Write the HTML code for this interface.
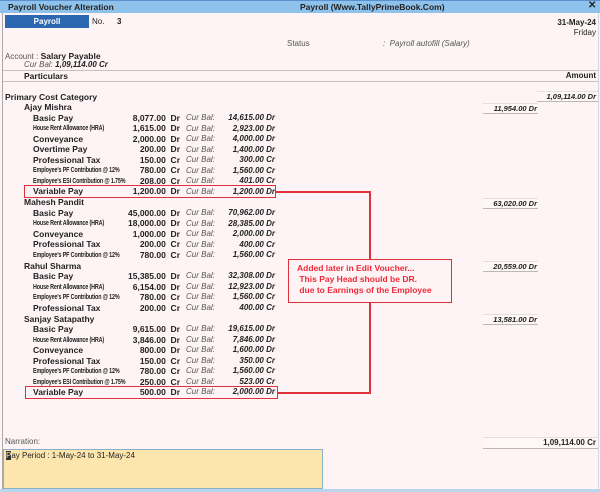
<!DOCTYPE html>
<html><head><meta charset="utf-8"><style>
*{margin:0;padding:0;box-sizing:border-box}
body{width:600px;height:492px;background:#fff4f5;font-family:"Liberation Sans",Arial,sans-serif;font-size:8px;color:#222;position:relative;overflow:hidden}
.a{position:absolute;white-space:nowrap;line-height:10px}
.b{font-weight:bold}
.i{font-style:italic}
.g{color:#555}
.r{text-align:right}
.c{display:inline-block;transform:scaleX(.72);transform-origin:left center;font-weight:bold;font-size:7.5px;letter-spacing:-0.2px}
.box{position:absolute;border-top:1px solid #e4e0e0;border-bottom:1px solid #bdb8b8;background:#fff6f6}
.n{font-size:8.5px}
.m{left:80px;width:100px}
</style></head><body>
<div class="a" style="left:0;top:0;width:600px;height:13px;background:#8fc2ea;border-top:1px solid #5a8fd0"></div>
<div class="a b" style="left:8px;top:2px;font-size:8.5px">Payroll Voucher Alteration</div>
<div class="a b" style="left:300px;top:2px;font-size:8.5px">Payroll (Www.TallyPrimeBook.Com)</div>
<div class="a b" style="left:588px;top:1px;font-size:10px">✕</div>
<div class="a" style="left:2px;top:13px;width:1px;height:476px;background:#aaa"></div>
<div class="a" style="left:598px;top:13px;width:1px;height:476px;background:#cfd8e8"></div>
<div class="a b" style="left:5px;top:15px;width:84px;height:13px;background:#2c67b2;color:#fff;text-align:center;line-height:13px">Payroll</div>
<div class="a" style="left:92px;top:17px">No.</div>
<div class="a b" style="left:117px;top:17px">3</div>
<div class="a b r" style="right:4px;top:18px">31-May-24</div>
<div class="a r" style="right:4px;top:28px">Friday</div>
<div class="a g" style="left:287px;top:39px">Status</div>
<div class="a g i" style="left:383px;top:39px">: &nbsp;Payroll autofill (Salary)</div>
<div class="a" style="left:5px;top:51px"><span class="g">Account : </span> <b class="n">Salary Payable</b></div>
<div class="a" style="left:24px;top:60px"><span class="i g">Cur Bal:</span> <b class="i">1,09,114.00 Cr</b></div>
<div class="a" style="left:3px;top:70px;width:595px;height:1px;background:#c8c0c0"></div>
<div class="a b n" style="left:24px;top:71px">Particulars</div>
<div class="a b r" style="right:4px;top:71px">Amount</div>
<div class="a" style="left:3px;top:81px;width:595px;height:1px;background:#c8c0c0"></div>
<div class="a b n" style="left:5px;top:92px">Primary Cost Category</div>
<div class="box" style="left:537px;top:91px;width:61px;height:11px"></div>
<div class="a b i r" style="right:4px;top:92px;font-size:7.5px">1,09,114.00 Dr</div>

<div class="box" style="left:483px;top:103px;width:55px;height:11px"></div>
<div class="a b i r" style="right:63px;top:104px;font-size:7.5px">11,954.00 Dr</div>
<div class="box" style="left:483px;top:198px;width:55px;height:11px"></div>
<div class="a b i r" style="right:63px;top:199px;font-size:7.5px">63,020.00 Dr</div>
<div class="box" style="left:483px;top:261px;width:55px;height:11px"></div>
<div class="a b i r" style="right:63px;top:262px;font-size:7.5px">20,559.00 Dr</div>
<div class="box" style="left:483px;top:314px;width:55px;height:11px"></div>
<div class="a b i r" style="right:63px;top:315px;font-size:7.5px">13,581.00 Dr</div>

<div class="a b n" style="left:24px;top:102px">Ajay Mishra</div>
<div class="a b n" style="left:24px;top:197px">Mahesh Pandit</div>
<div class="a b n" style="left:24px;top:261px">Rahul Sharma</div>
<div class="a b n" style="left:24px;top:314px">Sanjay Satapathy</div>

<div style="position:absolute;left:0;top:0">
<div class="a b n" style="left:33px;top:113px">Basic Pay</div><div class="a b r n m" style="top:113px">8,077.00 &nbsp;Dr</div>
<div class="a" style="left:33px;top:123px"><span class="c">House Rent Allowance (HRA)</span></div><div class="a b r n m" style="top:123px">1,615.00 &nbsp;Dr</div>
<div class="a b n" style="left:33px;top:134px">Conveyance</div><div class="a b r n m" style="top:134px">2,000.00 &nbsp;Dr</div>
<div class="a b n" style="left:33px;top:144px">Overtime Pay</div><div class="a b r n m" style="top:144px">200.00 &nbsp;Dr</div>
<div class="a b n" style="left:33px;top:155px">Professional Tax</div><div class="a b r n m" style="top:155px">150.00 &nbsp;Cr</div>
<div class="a" style="left:33px;top:165px"><span class="c">Employee's PF Contribution @ 12%</span></div><div class="a b r n m" style="top:165px">780.00 &nbsp;Cr</div>
<div class="a" style="left:33px;top:176px"><span class="c">Employee's ESI Contribution @ 1.75%</span></div><div class="a b r n m" style="top:176px">208.00 &nbsp;Cr</div>
<div class="a b n" style="left:33px;top:186px">Variable Pay</div><div class="a b r n m" style="top:186px">1,200.00 &nbsp;Dr</div>
<div class="a b n" style="left:33px;top:208px">Basic Pay</div><div class="a b r n m" style="top:208px">45,000.00 &nbsp;Dr</div>
<div class="a" style="left:33px;top:218px"><span class="c">House Rent Allowance (HRA)</span></div><div class="a b r n m" style="top:218px">18,000.00 &nbsp;Dr</div>
<div class="a b n" style="left:33px;top:229px">Conveyance</div><div class="a b r n m" style="top:229px">1,000.00 &nbsp;Dr</div>
<div class="a b n" style="left:33px;top:239px">Professional Tax</div><div class="a b r n m" style="top:239px">200.00 &nbsp;Cr</div>
<div class="a" style="left:33px;top:250px"><span class="c">Employee's PF Contribution @ 12%</span></div><div class="a b r n m" style="top:250px">780.00 &nbsp;Cr</div>
<div class="a b n" style="left:33px;top:271px">Basic Pay</div><div class="a b r n m" style="top:271px">15,385.00 &nbsp;Dr</div>
<div class="a" style="left:33px;top:282px"><span class="c">House Rent Allowance (HRA)</span></div><div class="a b r n m" style="top:282px">6,154.00 &nbsp;Dr</div>
<div class="a" style="left:33px;top:292px"><span class="c">Employee's PF Contribution @ 12%</span></div><div class="a b r n m" style="top:292px">780.00 &nbsp;Cr</div>
<div class="a b n" style="left:33px;top:303px">Professional Tax</div><div class="a b r n m" style="top:303px">200.00 &nbsp;Cr</div>
<div class="a b n" style="left:33px;top:324px">Basic Pay</div><div class="a b r n m" style="top:324px">9,615.00 &nbsp;Dr</div>
<div class="a" style="left:33px;top:335px"><span class="c">House Rent Allowance (HRA)</span></div><div class="a b r n m" style="top:335px">3,846.00 &nbsp;Dr</div>
<div class="a b n" style="left:33px;top:345px">Conveyance</div><div class="a b r n m" style="top:345px">800.00 &nbsp;Dr</div>
<div class="a b n" style="left:33px;top:356px">Professional Tax</div><div class="a b r n m" style="top:356px">150.00 &nbsp;Cr</div>
<div class="a" style="left:33px;top:366px"><span class="c">Employee's PF Contribution @ 12%</span></div><div class="a b r n m" style="top:366px">780.00 &nbsp;Cr</div>
<div class="a" style="left:33px;top:377px"><span class="c">Employee's ESI Contribution @ 1.75%</span></div><div class="a b r n m" style="top:377px">250.00 &nbsp;Cr</div>
<div class="a b n" style="left:33px;top:387px">Variable Pay</div><div class="a b r n m" style="top:387px">500.00 &nbsp;Dr</div>
</div>

<div style="position:absolute;left:0;top:0">
<div class="a i g" style="left:186px;top:113px;line-height:10.5px">Cur Bal:<br>Cur Bal:<br>Cur Bal:<br>Cur Bal:<br>Cur Bal:<br>Cur Bal:<br>Cur Bal:<br>Cur Bal:</div>
<div class="a b i r" style="left:205px;width:70px;top:113px;line-height:10.5px">14,615.00 Dr<br>2,923.00 Dr<br>4,000.00 Dr<br>1,400.00 Dr<br>300.00 Cr<br>1,560.00 Cr<br>401.00 Cr<br>1,200.00 Dr</div>
<div class="a i g" style="left:186px;top:208px;line-height:10.5px">Cur Bal:<br>Cur Bal:<br>Cur Bal:<br>Cur Bal:<br>Cur Bal:</div>
<div class="a b i r" style="left:205px;width:70px;top:208px;line-height:10.5px">70,962.00 Dr<br>28,385.00 Dr<br>2,000.00 Dr<br>400.00 Cr<br>1,560.00 Cr</div>
<div class="a i g" style="left:186px;top:271px;line-height:10.6px">Cur Bal:<br>Cur Bal:<br>Cur Bal:<br>Cur Bal:</div>
<div class="a b i r" style="left:205px;width:70px;top:271px;line-height:10.6px">32,308.00 Dr<br>12,923.00 Dr<br>1,560.00 Cr<br>400.00 Cr</div>
<div class="a i g" style="left:186px;top:324px;line-height:10.5px">Cur Bal:<br>Cur Bal:<br>Cur Bal:<br>Cur Bal:<br>Cur Bal:<br>Cur Bal:<br>Cur Bal:</div>
<div class="a b i r" style="left:205px;width:70px;top:324px;line-height:10.5px">19,615.00 Dr<br>7,846.00 Dr<br>1,600.00 Dr<br>350.00 Cr<br>1,560.00 Cr<br>523.00 Cr<br>2,000.00 Dr</div>
</div>

<div class="a" style="left:24px;top:185px;width:252px;height:13px;border:1.5px solid #e0303a"></div>
<div class="a" style="left:25px;top:386px;width:253px;height:13px;border:1.5px solid #e0303a"></div>
<div class="a" style="left:276px;top:191px;width:95px;height:1.5px;background:#e0303a"></div>
<div class="a" style="left:369px;top:191px;width:1.5px;height:202px;background:#e0303a"></div>
<div class="a" style="left:278px;top:392px;width:93px;height:1.5px;background:#e0303a"></div>
<div class="a" style="left:288px;top:259px;width:164px;height:44px;border:1.5px solid #e0303a;background:#fff4f5"></div>
<div class="a b" style="left:297px;top:263px;color:#ee2a3a;font-size:8.5px;line-height:11px">Added later in Edit Voucher...<br>&nbsp;This Pay Head should be DR.<br>&nbsp;due to Earnings of the Employee</div>

<div class="a g" style="left:5px;top:437px">Narration:</div>
<div class="box" style="left:483px;top:437px;width:115px;height:12px"></div>
<div class="a b r" style="right:4px;top:438px">1,09,114.00 Cr</div>
<div class="a" style="left:3px;top:449px;width:320px;height:40px;background:#fde6ae;border:1px solid #8ab0c8"></div>
<div class="a" style="left:6px;top:451px"><span style="background:#333;color:#fde6ae">P</span>ay Period : 1-May-24 to 31-May-24</div>
<div class="a" style="left:0;top:489px;width:600px;height:3px;background:#b8d6ee"></div>
</body></html>
